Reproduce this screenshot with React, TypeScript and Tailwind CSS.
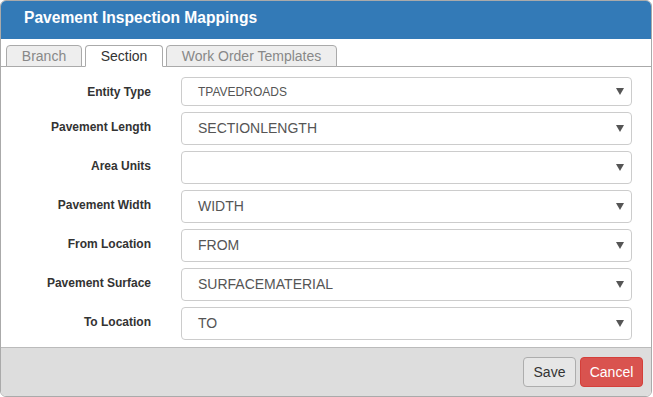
import React from "react";

interface Mapping {
  label: string;
  value: string;
  small?: boolean;
}

const mappings: Mapping[] = [
  { label: "Entity Type", value: "TPAVEDROADS", small: true },
  { label: "Pavement Length", value: "SECTIONLENGTH" },
  { label: "Area Units", value: "" },
  { label: "Pavement Width", value: "WIDTH" },
  { label: "From Location", value: "FROM" },
  { label: "Pavement Surface", value: "SURFACEMATERIAL" },
  { label: "To Location", value: "TO" },
];

const tabs = [
  { name: "Branch", w: "w-[76px]" },
  { name: "Section", w: "w-[78px]" },
  { name: "Work Order Templates", w: "w-[171px]" },
];

const Caret = () => (
  <svg width="8" height="7" viewBox="0 0 8 7" className="shrink-0">
    <path d="M0 0 L8 0 L4 7 Z" fill="#555" />
  </svg>
);

const App: React.FC = () => {
  return (
    <div
      className="w-[653px] h-[397px] bg-white"
      style={{ fontFamily: '"Liberation Sans", Arial, sans-serif' }}
    >
      <div className="w-[652px] h-[397px] flex flex-col border border-[#aaa] rounded-[6px] overflow-hidden">
        {/* header */}
        <div className="h-[38px] shrink-0 bg-[#337ab7] flex items-center pl-[23px] pb-[4px]">
          <h2 className="text-white text-[15.6px] font-bold">
            Pavement Inspection Mappings
          </h2>
        </div>

        {/* tabs */}
        <div className="flex items-end gap-[3px] pl-[5px] pt-[6px] border-b border-[#aaa]">
          {tabs.map((t) => {
            const active = t.name === "Section";
            return (
              <div
                key={t.name}
                className={`${t.w} h-[22px] -mb-px flex items-center justify-center text-[14px] rounded-t-[4px] border border-[#aaa] ${
                  active
                    ? "bg-white text-[#333] border-b-white"
                    : "bg-[#eee] text-[#888]"
                }`}
              >
                {t.name}
              </div>
            );
          })}
        </div>

        {/* form */}
        <div className="flex-1 flex flex-col gap-[6px] pt-[10px] pl-[1px]">
          {mappings.map((m) => (
            <div key={m.label} className="flex items-start">
              <label className="w-[149px] pt-[7px] text-right text-[12px] leading-[17px] font-bold text-[#333]">
                {m.label}
              </label>
              <div
                className={`ml-[30px] w-[451px] ${
                  m.small ? "h-[29px] text-[12px]" : "h-[33px] text-[14px]"
                } flex items-center justify-between pl-[16px] pr-[7px] border border-[#ccc] rounded-[4px] text-[#555]`}
              >
                <span>{m.value}</span>
                <Caret />
              </div>
            </div>
          ))}
        </div>

        {/* footer */}
        <div className="h-[49px] shrink-0 bg-[#ddd] border-t border-[#bbb] flex items-center justify-end gap-[4px] pr-[8px]">
          <button className="h-[30px] w-[53px] rounded-[4px] border border-[#adadad] bg-[#e6e6e6] text-[14px] text-[#333]">
            Save
          </button>
          <button className="h-[30px] w-[63px] rounded-[4px] border border-[#d43f3a] bg-[#d9534f] text-[14px] text-white">
            Cancel
          </button>
        </div>
      </div>
    </div>
  );
};

export default App;
